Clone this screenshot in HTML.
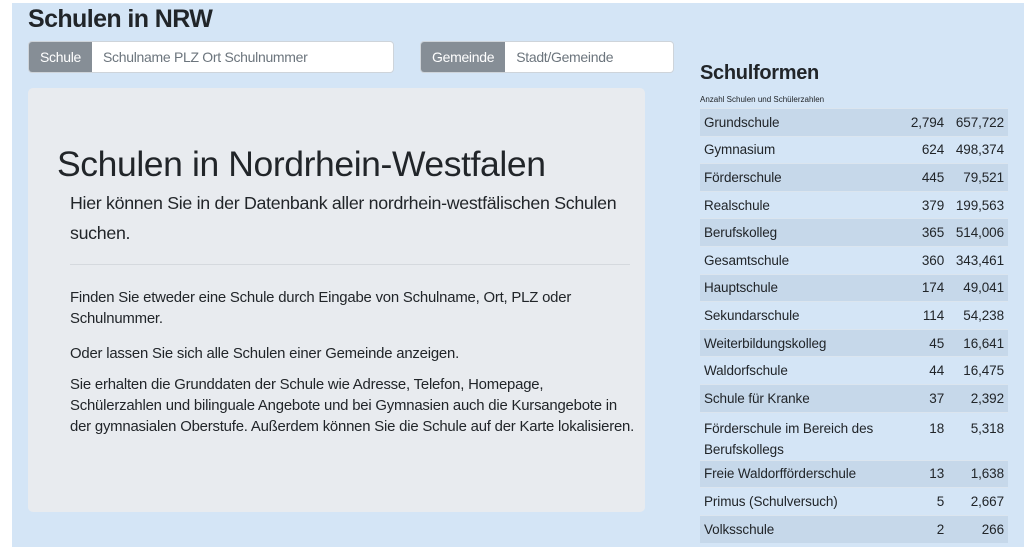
<!DOCTYPE html>
<html><head><meta charset="utf-8"><style>
*{margin:0;padding:0;box-sizing:border-box}
body{width:1024px;height:547px;background:#fff;font-family:"Liberation Sans",sans-serif;color:#212529;position:relative;overflow:hidden}
.bg{position:absolute;left:12px;top:3px;right:0;bottom:0;background:#d4e5f6}
.a{position:absolute;white-space:nowrap}
h1{position:absolute;left:28px;top:5px;font-size:25px;font-weight:bold;letter-spacing:-0.6px}
.ig{position:absolute;top:41px;height:32px;display:flex;border-radius:4px;overflow:hidden;border:1px solid #ced4da}
.ig .l{background:#868e96;color:#fff;font-size:14px;display:flex;align-items:center;padding:0 11px;letter-spacing:-0.3px}
.ig .i{background:#fff;flex:1;color:#6c757d;font-size:14px;display:flex;align-items:center;padding:0 11px;letter-spacing:-0.3px}
.jb{position:absolute;left:28px;top:88px;width:617px;height:424px;background:#e8ebef;border-radius:5px}
.h2{font-size:35.5px;left:57px;top:144px;letter-spacing:-0.4px}
.lead{font-size:17.8px;left:70px;line-height:30px;letter-spacing:-0.3px}
.p{font-size:14.9px;left:70px;line-height:21px;letter-spacing:-0.2px}
hr{position:absolute;left:70px;top:264px;width:560px;border:0;border-top:1px solid #d5d9de}
table{position:absolute;left:700px;top:108px;width:308px;border-collapse:collapse;font-size:13.5px;letter-spacing:-0.1px}
td{height:27.6px;padding:0 4px 0 4px;vertical-align:middle;border-top:1px solid #dbe5ef}
td.n{text-align:right;white-space:nowrap}
td.m{padding-right:0}
tr:nth-child(odd) td{background:#c6d8ea}
</style></head><body>
<div class="bg"></div>
<h1>Schulen in NRW</h1>
<div class="ig" style="left:28px;width:366px"><div class="l">Schule</div><div class="i">Schulname PLZ Ort Schulnummer</div></div>
<div class="ig" style="left:420px;width:254px"><div class="l">Gemeinde</div><div class="i">Stadt/Gemeinde</div></div>
<div class="jb"></div>
<div class="a h2">Schulen in Nordrhein-Westfalen</div>
<div class="a lead" style="top:188px">Hier können Sie in der Datenbank aller nordrhein-westfälischen Schulen<br>suchen.</div>
<hr>
<div class="a p" style="top:288px">Finden Sie etweder eine Schule durch Eingabe von Schulname, Ort, PLZ oder<br>Schulnummer.</div>
<div class="a p" style="top:344px">Oder lassen Sie sich alle Schulen einer Gemeinde anzeigen.</div>
<div class="a p" style="top:375px">Sie erhalten die Grunddaten der Schule wie Adresse, Telefon, Homepage,<br>Schülerzahlen und bilinguale Angebote und bei Gymnasien auch die Kursangebote in<br>der gymnasialen Oberstufe. Außerdem können Sie die Schule auf der Karte lokalisieren.</div>
<div class="a" style="left:700px;top:62px;font-size:20px;font-weight:bold;letter-spacing:-0.3px">Schulformen</div>
<div class="a" style="left:700px;top:95px;font-size:8px">Anzahl Schulen und Schülerzahlen</div>
<table>
<tr><td>Grundschule</td><td class="n m">2,794</td><td class="n">657,722</td></tr>
<tr><td>Gymnasium</td><td class="n m">624</td><td class="n">498,374</td></tr>
<tr><td>Förderschule</td><td class="n m">445</td><td class="n">79,521</td></tr>
<tr><td>Realschule</td><td class="n m">379</td><td class="n">199,563</td></tr>
<tr><td>Berufskolleg</td><td class="n m">365</td><td class="n">514,006</td></tr>
<tr><td>Gesamtschule</td><td class="n m">360</td><td class="n">343,461</td></tr>
<tr><td>Hauptschule</td><td class="n m">174</td><td class="n">49,041</td></tr>
<tr><td>Sekundarschule</td><td class="n m">114</td><td class="n">54,238</td></tr>
<tr><td>Weiterbildungskolleg</td><td class="n m">45</td><td class="n">16,641</td></tr>
<tr><td>Waldorfschule</td><td class="n m">44</td><td class="n">16,475</td></tr>
<tr><td>Schule für Kranke</td><td class="n m">37</td><td class="n">2,392</td></tr>
<tr><td style="height:48px;vertical-align:top;padding-top:5px;line-height:21px">Förderschule im Bereich des<br>Berufskollegs</td><td class="n m" style="vertical-align:top;padding-top:5px;line-height:21px">18</td><td class="n" style="vertical-align:top;padding-top:5px;line-height:21px">5,318</td></tr>
<tr><td>Freie Waldorfförderschule</td><td class="n m">13</td><td class="n">1,638</td></tr>
<tr><td>Primus (Schulversuch)</td><td class="n m">5</td><td class="n">2,667</td></tr>
<tr><td>Volksschule</td><td class="n m">2</td><td class="n">266</td></tr>
</table>
</body></html>
